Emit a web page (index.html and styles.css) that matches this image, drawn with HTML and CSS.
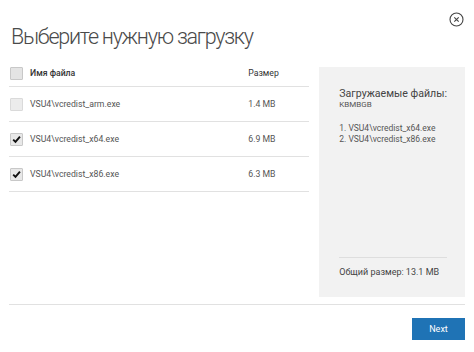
FILE: index.html
```html
<!DOCTYPE html>
<html lang="ru">
<head>
<meta charset="utf-8">
<link rel="stylesheet" href="styles.css">
</head>
<body>
<div class="dialog">
  <div class="topbar">
    <button class="close" aria-label="Закрыть">
      <svg width="15" height="15" viewBox="0 0 15 15"><circle cx="7.5" cy="7.5" r="6.5" fill="none" stroke="#444" stroke-width="1.1"/><path d="M5.3 5.3 L9.7 9.7 M9.7 5.3 L5.3 9.7" stroke="#444" stroke-width="1.1"/></svg>
    </button>
  </div>
  <h1 class="title">Выберите нужную загрузку</h1>
  <div class="content">
    <div class="table">
      <div class="row head">
        <span class="cb"></span>
        <span class="name">Имя файла</span>
        <span class="size">Размер</span>
      </div>
      <div class="row">
        <span class="cb disabled"></span>
        <span class="name">VSU4\vcredist_arm.exe</span>
        <span class="size">1.4 MB</span>
      </div>
      <div class="row">
        <span class="cb checked"><svg width="13" height="13" viewBox="0 0 13 13"><path d="M2.6 6.6 L5.3 9.4 L10.6 3" fill="none" stroke="#111" stroke-width="2.2"/></svg></span>
        <span class="name">VSU4\vcredist_x64.exe</span>
        <span class="size">6.9 MB</span>
      </div>
      <div class="row">
        <span class="cb checked"><svg width="13" height="13" viewBox="0 0 13 13"><path d="M2.6 6.6 L5.3 9.4 L10.6 3" fill="none" stroke="#111" stroke-width="2.2"/></svg></span>
        <span class="name">VSU4\vcredist_x86.exe</span>
        <span class="size">6.3 MB</span>
      </div>
    </div>
    <aside class="panel">
      <div class="panel-top">
        <div class="panel-title">Загружаемые файлы:</div>
        <div class="panel-kb">KBMBGB</div>
        <ol class="panel-list">
          <li>1. VSU4\vcredist_x64.exe</li>
          <li>2. VSU4\vcredist_x86.exe</li>
        </ol>
      </div>
      <div class="panel-total">Общий размер: 13.1 MB</div>
    </aside>
  </div>
  <div class="footer">
    <button class="next">Next</button>
  </div>
</div>
</body>
</html>
```
FILE: styles.css
```css
* { box-sizing: border-box; }
html, body { margin: 0; padding: 0; background: #fff; }
body {
  font-family: "Roboto", "Open Sans", sans-serif;
  color: #444;
  width: 474px;
  height: 352px;
  overflow: hidden;
}
.dialog {
  padding: 0 9px 0 9px;
}
.topbar {
  display: flex;
  justify-content: flex-end;
  height: 23px;
  padding-top: 12px;
}
.close {
  border: 0;
  background: none;
  padding: 0;
  margin-right: 1px;
  width: 15px;
  height: 15px;
  display: block;
}
.close svg { display: block; }
.title {
  margin: 0 0 0 2px;
  font-weight: 300;
  font-size: 21.5px;
  letter-spacing: -1.25px;
  line-height: 28px;
  color: #4a4a4a;
  height: 37px;
}
.content {
  display: flex;
  gap: 10px;
  align-items: flex-start;
}
.table {
  width: 301px;
}
.row {
  display: flex;
  align-items: center;
  height: 35px;
  border-bottom: 1px solid #e1e1e1;
  font-size: 8.7px;
  color: #555;
}
.row.head {
  height: 27px;
  color: #333;
}
.row.head .name { font-weight: 500; }
.cb {
  width: 13px;
  height: 13px;
  margin-left: 1px;
  border: 1px solid #c8c8c8;
  background: #e4e4e4;
  border-radius: 1px;
  display: flex;
  align-items: center;
  justify-content: center;
}
.cb.disabled { background: #ececec; border-color: #dadada; }
.cb.checked { background: #e8e8e8; }
.cb svg { display: block; }
.name {
  margin-left: 7px;
  flex: 1;
}
.size {
  width: 61px;
}
.panel {
  width: 146px;
  height: 230px;
  margin-top: 7px;
  background: #f2f2f2;
  padding: 20px 18px 0 20px;
  display: flex;
  flex-direction: column;
  justify-content: space-between;
}
.panel-title {
  font-size: 10.6px;
  line-height: 13px;
  color: #444;
  white-space: nowrap;
}
.panel-kb {
  font-size: 8px;
  line-height: 10px;
  color: #555;
}
.panel-list {
  list-style: none;
  margin: 13px 0 0 0;
  padding: 0;
  font-size: 8.5px;
  line-height: 11px;
  color: #555;
}
.panel-total {
  border-top: 1px solid #dedede;
  height: 40px;
  padding-top: 9px;
  font-size: 9px;
  color: #444;
}
.footer {
  margin-top: 7px;
  border-top: 1px solid #e1e1e1;
  padding-top: 13px;
  display: flex;
  justify-content: flex-end;
}
.next {
  width: 53px;
  height: 22px;
  border: 0;
  background: #1f73b5;
  color: #fff;
  font-family: "Roboto", "Open Sans", sans-serif;
  font-size: 9px;
  padding: 0;
}
```
